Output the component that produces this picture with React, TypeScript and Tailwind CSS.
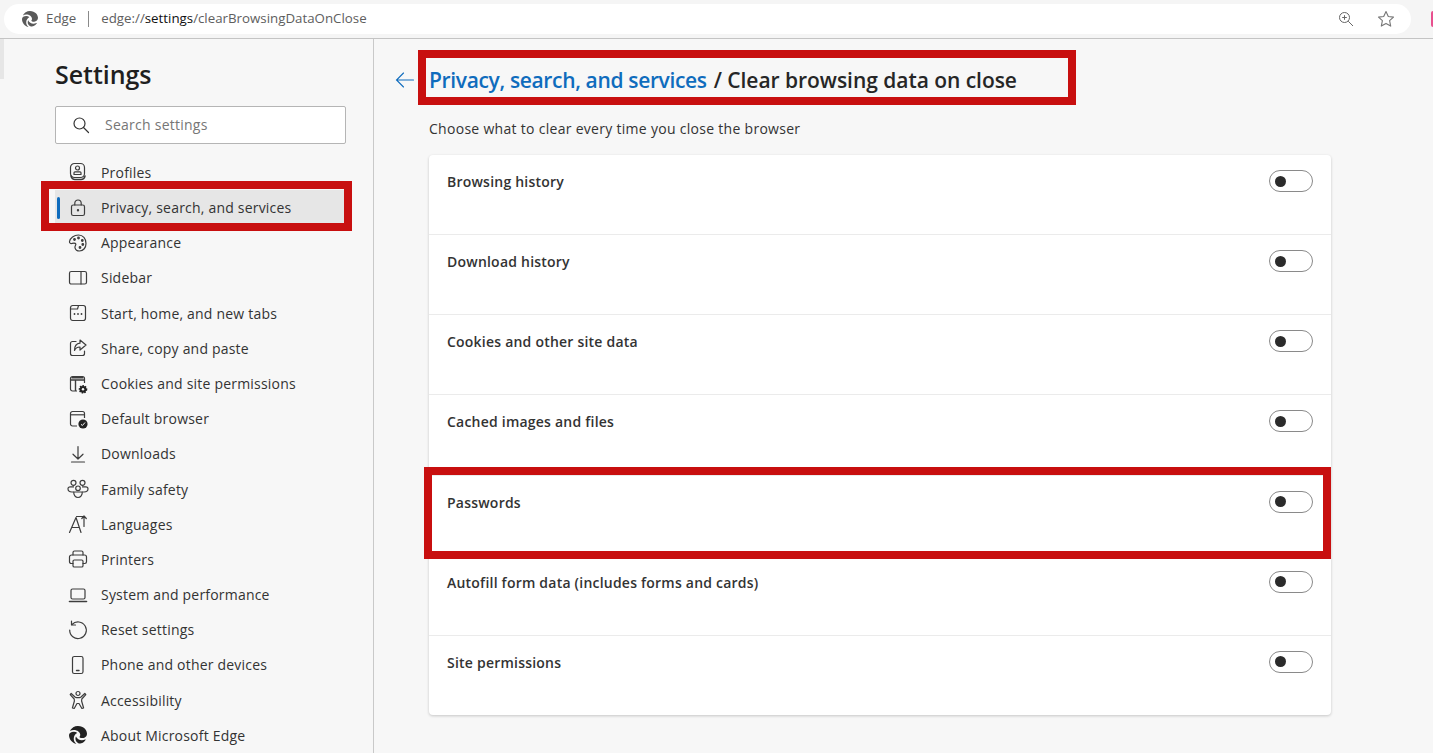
import React from 'react';
import { FaEdge } from 'react-icons/fa6';

const Ic = ({ children }: { children: React.ReactNode }) => (
    <svg width="20" height="20" viewBox="0 0 20 20" fill="none" stroke="#3d3d3d" strokeWidth="1.2" strokeLinecap="round" strokeLinejoin="round">
        {children}
    </svg>
);

const navItems: { label: string; icon: React.ReactNode; active?: boolean }[] = [
    {
        label: 'Profiles',
        icon: (
            <Ic>
                <rect x="2.5" y="1.5" width="14" height="14" rx="4" />
                <path d="M3 14c.5 2 2 3.500 4 3.500h6c1.500 0 3.500-1 4-3.500" strokeWidth="1.5" />
                <circle cx="9.5" cy="6" r="2" />
                <path d="M6 12.500v-1.700c0-.6.4-1 1-1h5c.6 0 1 .4 1 1v1.700z" />
            </Ic>
        ),
    },
    {
        label: 'Privacy, search, and services',
        active: true,
        icon: (
            <Ic>
                <rect x="3.5" y="7" width="13" height="10.5" rx="1.8" />
                <path d="M6.8 7V5.2a3.2 3.2 0 0 1 6.4 0V7" />
                <circle cx="10" cy="12.3" r=".6" fill="#444" />
            </Ic>
        ),
    },
    {
        label: 'Appearance',
        icon: (
            <Ic>
                <path d="M10.5 2C6 2 2 5 1.5 8.5c-.2 1.5 1 2.2 2.3 2 1.600-.3 3.500-.8 4 .5.400 1.200-1.300 2-.8 3.800.500 2 2.500 3.200 4.500 3.200 4 0 6.500-3.500 6.500-7.500C18 5.500 15 2 10.500 2z" />
                <circle cx="6.5" cy="6.5" r=".8" fill="#444" />
                <circle cx="10.5" cy="5" r=".8" fill="#444" />
                <circle cx="14.3" cy="7.5" r=".8" fill="#444" />
                <circle cx="14.8" cy="11.5" r=".8" fill="#444" />
                <circle cx="12" cy="14.5" r=".8" fill="#444" />
            </Ic>
        ),
    },
    {
        label: 'Sidebar',
        icon: (
            <Ic>
                <rect x="1.5" y="3.5" width="17" height="12.5" rx="1.8" />
                <path d="M13 3.5V16" />
            </Ic>
        ),
    },
    {
        label: 'Start, home, and new tabs',
        icon: (
            <Ic>
                <rect x="2.5" y="2.5" width="15" height="15" rx="2.2" />
                <path d="M2.500 6h7l1-3.300" />
                <path d="M6.500 11h.01M10 11h.01M13.500 11h.01" strokeWidth="1.8" />
            </Ic>
        ),
    },
    {
        label: 'Share, copy and paste',
        icon: (
            <Ic>
                <path d="M8 3.500H4.500a2 2 0 0 0-2 2v10a2 2 0 0 0 2 2h10a2 2 0 0 0 2-2V13" />
                <path d="M12 2l6 5-6 5V9C9.500 9 7.500 10 6.500 12.500 6.500 8.500 8.500 5.500 12 5.200z" />
            </Ic>
        ),
    },
    {
        label: 'Cookies and site permissions',
        icon: (
            <svg width="20" height="20" viewBox="0 0 20 20" fill="none" stroke="#3d3d3d" strokeWidth="1.2">
                <path d="M9 17H4.500a2 2 0 0 1-2-2V4.500a2 2 0 0 1 2-2h10a2 2 0 0 1 2 2V9" />
                <path d="M2.500 6h14M7.500 6v11M3.500 3.800h12" strokeWidth="1.4" />
                <circle cx="15" cy="15.3" r="3.4" fill="#222" stroke="#222" strokeWidth="1.8" strokeDasharray="1.5 1" />
                <circle cx="15" cy="15.3" r="1.2" fill="#f7f7f7" stroke="none" />
            </svg>
        ),
    },
    {
        label: 'Default browser',
        icon: (
            <svg width="20" height="20" viewBox="0 0 20 20" fill="none" stroke="#3d3d3d" strokeWidth="1.2">
                <path d="M9 17H4.500a2 2 0 0 1-2-2V4.500a2 2 0 0 1 2-2h10a2 2 0 0 1 2 2V9" />
                <path d="M2.500 5.800h14" />
                <circle cx="15" cy="15" r="4.600" fill="#222" stroke="none" />
                <path d="M13 15.300l1.400 1.200 2.600-3" stroke="#f7f7f7" strokeWidth="1" />
            </svg>
        ),
    },
    {
        label: 'Downloads',
        icon: (
            <Ic>
                <path d="M10 2.500v12.500M5 10.200L10 15l5-4.800M3.500 18h13" />
            </Ic>
        ),
    },
    {
        label: 'Family safety',
        icon: (
            <svg width="22" height="20" viewBox="0 0 22 20" fill="none" stroke="#3d3d3d" strokeWidth="1.2">
                <circle cx="6.5" cy="3.8" r="2.5" />
                <circle cx="15.5" cy="3.8" r="2.5" />
                <circle cx="11" cy="9.3" r="2.3" />
                <path d="M7 7.800H3.200C1.800 7.800 1 8.600 1 9.800c0 1.800 1.500 3.200 4 3.200h1.800" />
                <path d="M15 7.800h3.800c1.400 0 2.200.8 2.200 2 0 1.800-1.500 3.200-4 3.200h-1.800" />
                <path d="M6.800 13h8.400c.4 3-1.700 5.500-4.200 5.500S6.400 16 6.800 13z" />
            </svg>
        ),
    },
    {
        label: 'Languages',
        icon: (
            <Ic>
                <path d="M1.500 18.500L8 3.500l5 15M3.800 13.500h7.500" />
                <path d="M8.500 2.500h6.500M16 2v10.500M13.800 4.500L16 2l2.300 2.500" />
            </Ic>
        ),
    },
    {
        label: 'Printers',
        icon: (
            <Ic>
                <path d="M5 6V3.500a1.500 1.500 0 0 1 1.500-1.500h7A1.500 1.500 0 0 1 15 3.500V6" />
                <path d="M5 14.500H3.200a1.700 1.700 0 0 1-1.700-1.700V8a2 2 0 0 1 2-2h13a2 2 0 0 1 2 2v4.800a1.700 1.700 0 0 1-1.700 1.700H15" />
                <rect x="5" y="11" width="10" height="7" rx="1.3" />
            </Ic>
        ),
    },
    {
        label: 'System and performance',
        icon: (
            <Ic>
                <rect x="3" y="4" width="14" height="10" rx="1.5" />
                <path d="M1.500 16.500h17" strokeWidth="1.6" />
            </Ic>
        ),
    },
    {
        label: 'Reset settings',
        icon: (
            <Ic>
                <path d="M4 4.500A8.300 8.300 0 1 1 1.700 10" />
                <path d="M3.500 1v4h4" />
            </Ic>
        ),
    },
    {
        label: 'Phone and other devices',
        icon: (
            <Ic>
                <rect x="4.5" y="1.5" width="10.5" height="17" rx="1.8" />
                <path d="M8.500 15.500h2.500" strokeWidth="1.4" />
            </Ic>
        ),
    },
    {
        label: 'Accessibility',
        icon: (
            <Ic>
                <circle cx="10" cy="3.5" r="2" />
                <path d="M3.200 3.500L7 7c.5.4 1 .6 1.500.6h3c.5 0 1-.2 1.500-.6l3.800-3.500 1 1.200-4 4.300-.2 2 2 7-1.700.5L11 13.500H9l-2.800 5-1.800-.5 2-7-.2-2-4-4.300z" />
            </Ic>
        ),
    },
    {
        label: 'About Microsoft Edge',
        icon: <FaEdge size={18} color="#222" />,
    },
];

const options = [
    'Browsing history',
    'Download history',
    'Cookies and other site data',
    'Cached images and files',
    'Passwords',
    'Autofill form data (includes forms and cards)',
    'Site permissions',
];

const Toggle = () => (
    <div className="flex h-[22px] w-[44px] items-center rounded-full border border-[#8a8a8a] pl-[5px]">
        <div className="h-[11px] w-[11px] rounded-full bg-[#2b2b2b]" />
    </div>
);

const App = () => {
    return (
        <div className="relative flex h-screen w-full flex-col overflow-hidden bg-[#f7f7f7] font-['Open_Sans',sans-serif] text-[#262626]">
            {/* browser bar */}
            <div className="flex h-[39px] shrink-0 items-center border-b border-[#c4c4c4] bg-[#f5f5f5] pl-1">
                <div className="flex h-[30px] w-[1407px] items-center rounded-full bg-white pl-[18px] pr-[16px] text-[13.3px] text-[#5e5e5e]">
                    <FaEdge size={16} color="#5a5a5a" />
                    <span className="ml-2">Edge</span>
                    <div className="mx-[12px] h-4 w-px bg-[#8a8a8a]" />
                    <span>
                        edge://<span className="text-[#111]">settings</span>/clearBrowsingDataOnClose
                    </span>
                    <div className="ml-auto flex items-center gap-[22px]">
                        <svg width="18" height="18" viewBox="0 0 18 18" fill="none" stroke="#666" strokeWidth="1">
                            <circle cx="7.5" cy="7.5" r="5" />
                            <path d="M11.200 11.200L16 16M5.200 7.500h4.600M7.500 5.200v4.600" />
                        </svg>
                        <svg width="18" height="18" viewBox="0 0 18 18" fill="none" stroke="#777" strokeWidth="1.1" strokeLinejoin="round">
                            <path d="M9 1.500l2.300 5 5.200.6-3.900 3.600 1.100 5.400L9 13.400l-4.700 2.700 1.100-5.400L1.500 7.100l5.200-.6z" />
                        </svg>
                    </div>
                </div>
                <div className="ml-auto h-4 w-[2px] rounded-l-sm bg-[#e8508e]" />
            </div>

            <div className="flex min-h-0 flex-1">
                {/* sidebar */}
                <div className="relative w-[374px] shrink-0 border-r border-[#c9c9c9] pl-[55px]">
                    <div className="absolute left-0 top-0 h-10 w-1 bg-[#e6e6e6]" />
                    <h1 className="pt-[19px] text-[25px] leading-[32px] font-semibold tracking-[-0.05px] text-[#1f1f1f]">Settings</h1>
                    <div className="mt-[16px] flex h-[38px] w-[291px] items-center rounded-[2px] border border-[#b5b5b5] bg-white pb-[2px] pl-4 text-[14px] tracking-[0.25px] text-[#767676]">
                        <svg className="mt-[2px]" width="18" height="18" viewBox="0 0 18 18" fill="none" stroke="#333" strokeWidth="1.2" strokeLinecap="round">
                            <circle cx="7.5" cy="7.5" r="5.5" />
                            <path d="M11.500 11.500L16.500 16.500" />
                        </svg>
                        <span className="ml-[15px]">Search settings</span>
                    </div>
                    <nav className="mt-[10.9px] w-[289px] text-[14px] tracking-[0.2px] text-[#333]">
                        {navItems.map((item) => (
                            <div key={item.label} className={`relative flex h-[35.18px] items-center ${item.active ? 'bg-[#e6e6e6]' : ''}`}>
                                {item.active && <div className="absolute left-[2px] top-[7px] h-[22px] w-[3px] rounded-full bg-[#0f6cbd]" />}
                                <div className="flex w-[46px] justify-center">{item.icon}</div>
                                <span>{item.label}</span>
                            </div>
                        ))}
                    </nav>
                </div>

                {/* main */}
                <div className="min-w-0 flex-1 pl-[55px]">
                    <div className="relative mt-[21px] flex h-[41px] items-center pt-px text-[21px] font-semibold tracking-[-0.35px] text-[#262626]">
                        <svg className="absolute left-[-34px] top-[10px]" width="20" height="20" viewBox="0 0 20 20" fill="none" stroke="#0f6cbd" strokeWidth="1.1" strokeLinecap="round">
                            <path d="M1.500 10h17M8.500 3L1.500 10l7 7" />
                        </svg>
                        <span className="text-[#0f6cbd]">Privacy, search, and services</span>
                        <span className="ml-[7px] tracking-[-0.04px]">/ Clear browsing data on close</span>
                    </div>
                    <p className="mt-[18px] text-[14px] leading-[20px] tracking-[0.29px] text-[#333]">Choose what to clear every time you close the browser</p>
                    <div className="mt-[16.15px] w-[902px] rounded-[4px] bg-white shadow-[0_1px_3px_rgba(0,0,0,0.2)]">
                        {options.map((label) => (
                            <div key={label} className="flex h-[80.1px] items-start justify-between border-b border-[#ebebeb] px-[18px] pt-[15px] last:h-[79.4px] last:border-b-0">
                                <span className="text-[14px] leading-[24px] font-semibold tracking-[0.22px] text-[#333]">{label}</span>
                                <Toggle />
                            </div>
                        ))}
                    </div>
                </div>
            </div>

            {/* annotation boxes */}
            <div className="absolute left-[41px] top-[181px] h-[50px] w-[311px] border-[8px] border-[#c80f0f]" />
            <div className="absolute left-[418px] top-[50px] h-[55px] w-[658px] border-[8px] border-[#c80f0f]" />
            <div className="absolute left-[424px] top-[467px] h-[92px] w-[907px] border-[8px] border-[#c80f0f]" />
        </div>
    );
};

export default App;
